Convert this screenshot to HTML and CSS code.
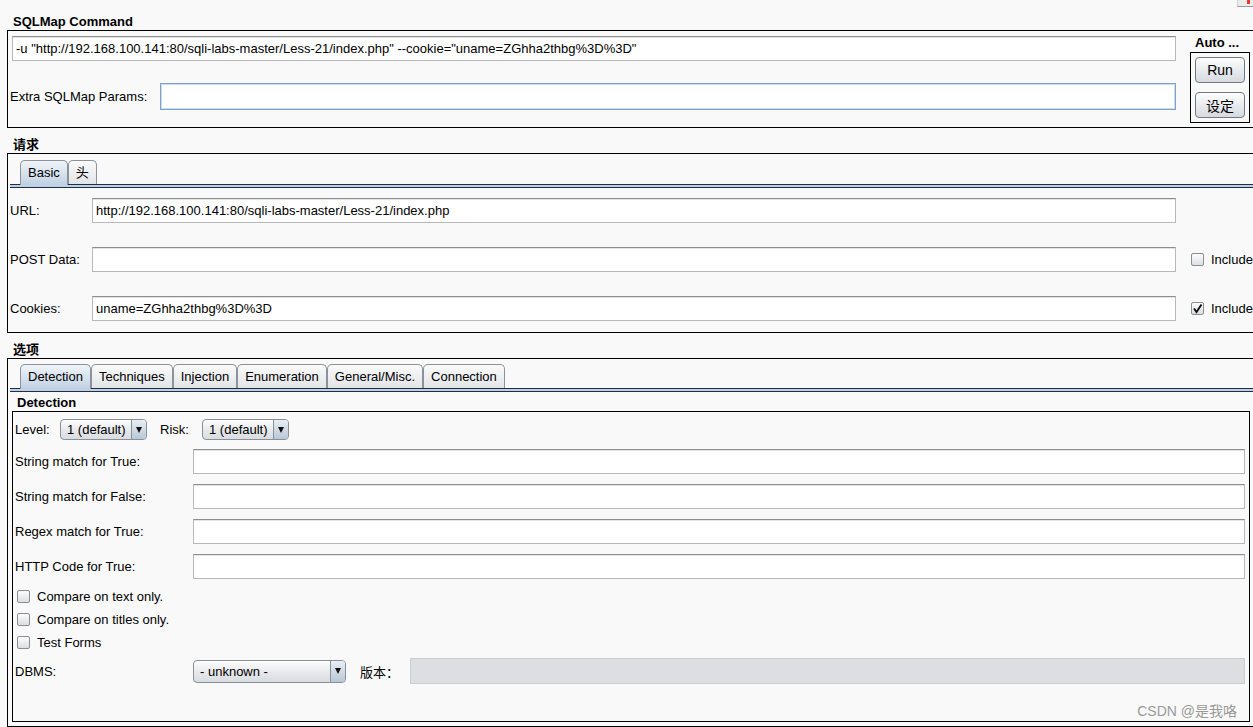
FILE: index.html
```html
<!DOCTYPE html>
<html>
<head>
    <meta charset="UTF-8">
    <title>SQLMap</title>
    <link rel="stylesheet" href="styles.css">
</head>
<body>
    <div class="corner"><span></span></div>

    <div class="ttl">SQLMap Command</div>
    <div class="panel cmd">
        <div class="cmd-main">
            <input class="inp cmd-line" type="text" value='-u "http://192.168.100.141:80/sqli-labs-master/Less-21/index.php" --cookie="uname=ZGhha2thbg%3D%3D"'>
            <div class="row extra-row">
                <label class="lbl extra-lbl">Extra SQLMap Params:</label>
                <input class="inp focus extra-inp" type="text">
            </div>
        </div>
        <div class="auto">
            <div class="auto-ttl">Auto ...</div>
            <div class="auto-box">
                <button class="btn">Run</button>
                <button class="btn">设定</button>
            </div>
        </div>
    </div>

    <div class="ttl next">请求</div>
    <div class="panel req">
        <div class="tabs">
            <div class="tab on">Basic</div>
            <div class="tab">头</div>
        </div>
        <div class="band"></div>
        <div class="req-rows">
            <div class="row req-row">
                <label class="lbl req-lbl">URL:</label>
                <input class="inp req-inp" type="text" value="http://192.168.100.141:80/sqli-labs-master/Less-21/index.php">
            </div>
            <div class="row req-row">
                <label class="lbl req-lbl">POST Data:</label>
                <input class="inp req-inp" type="text">
                <span class="chk inc"></span><span class="chk-txt">Include</span>
            </div>
            <div class="row req-row">
                <label class="lbl req-lbl">Cookies:</label>
                <input class="inp req-inp" type="text" value="uname=ZGhha2thbg%3D%3D">
                <span class="chk inc">
                    <svg width="11" height="11" viewBox="0 0 11 11"><path d="M2 5.5 L4.5 9 L9.5 1.5" fill="none" stroke="#111" stroke-width="1.9"/></svg>
                </span><span class="chk-txt">Include</span>
            </div>
        </div>
    </div>

    <div class="ttl next">选项</div>
    <div class="panel opts">
        <div class="tabs">
            <div class="tab on">Detection</div>
            <div class="tab">Techniques</div>
            <div class="tab">Injection</div>
            <div class="tab">Enumeration</div>
            <div class="tab">General/Misc.</div>
            <div class="tab">Connection</div>
        </div>
        <div class="band"></div>
        <div class="sub-ttl">Detection</div>
        <div class="det">
            <div class="row lvl-row">
                <label class="lbl lvl-lbl">Level:</label>
                <div class="sel lvl-sel"><span class="sel-txt">1 (default)</span><span class="arr"></span></div>
                <label class="lbl risk-lbl">Risk:</label>
                <div class="sel lvl-sel"><span class="sel-txt">1 (default)</span><span class="arr"></span></div>
            </div>
            <div class="row det-row first">
                <label class="lbl det-lbl">String match for True:</label>
                <input class="inp det-inp" type="text">
            </div>
            <div class="row det-row">
                <label class="lbl det-lbl">String match for False:</label>
                <input class="inp det-inp" type="text">
            </div>
            <div class="row det-row">
                <label class="lbl det-lbl">Regex match for True:</label>
                <input class="inp det-inp" type="text">
            </div>
            <div class="row det-row">
                <label class="lbl det-lbl">HTTP Code for True:</label>
                <input class="inp det-inp" type="text">
            </div>
            <div class="cb-list">
                <div class="row cb-row"><span class="chk"></span><span class="chk-txt">Compare on text only.</span></div>
                <div class="row cb-row"><span class="chk"></span><span class="chk-txt">Compare on titles only.</span></div>
                <div class="row cb-row"><span class="chk"></span><span class="chk-txt">Test Forms</span></div>
            </div>
            <div class="row dbms-row">
                <label class="lbl det-lbl">DBMS:</label>
                <div class="sel dbms-sel"><span class="sel-txt">- unknown -</span><span class="arr"></span></div>
                <label class="lbl ver-lbl">版本：</label>
                <div class="ver"></div>
            </div>
        </div>
    </div>

    <div class="mark">CSDN @是我咯</div>
</body>
</html>
```

FILE: styles.css
```css
* {
    box-sizing: border-box;
}

html, body {
    height: 100%;
}

body {
    margin: 0;
    padding: 14px 0 0 7px;
    background: #f9f9f9;
    font-family: "Liberation Sans", Arial, "Noto Sans CJK SC", sans-serif;
    font-size: 13px;
    color: #000;
    overflow: hidden;
    position: relative;
}

.corner {
    position: absolute;
    top: 0;
    right: 0;
    width: 16px;
    height: 7px;
    background: #ececec;
    border-bottom: 1px solid #9a9a9a;
    border-left: 1px solid #d0d0d0;
}

.corner span {
    position: absolute;
    top: 0;
    left: 9px;
    width: 3px;
    height: 4px;
    background: #e03c2c;
}

.ttl {
    font-weight: bold;
    height: 16px;
    line-height: 16px;
    padding-left: 6px;
}

.ttl.next {
    margin-top: 9px;
}

.panel {
    border: 1px solid #000;
    margin-right: -12px;
    padding-left: 2px;
}

.row {
    display: flex;
    align-items: center;
}

.lbl {
    flex: none;
    white-space: nowrap;
}

.inp {
    flex: none;
    height: 25px;
    margin: 0;
    padding: 0 3px;
    font: inherit;
    color: #000;
    background: #fff;
    border: 1px solid #b8b8b8;
    border-top-color: #8e8e8e;
    box-shadow: inset 0 1px 0 #e4e4e4;
    outline: none;
}

.inp.focus {
    border: 1px solid #7ea0cb;
    box-shadow: inset 0 0 0 1px #c9dbef;
}

/* command panel */
.cmd {
    height: 98px;
    display: grid;
    grid-template-columns: 1166px 60px;
    column-gap: 14px;
}

.cmd-main {
    padding-top: 5px;
}

.cmd-line {
    display: block;
    margin-left: 2px;
    width: 1164px;
}

.extra-row {
    margin-top: 22px;
}

.extra-lbl {
    width: 150px;
}

.extra-inp {
    width: 1016px;
    height: 27px;
}

.auto {
    padding-top: 4px;
}

.auto-ttl {
    font-weight: bold;
    height: 16px;
    line-height: 16px;
    padding-left: 5px;
}

.auto-box {
    margin-top: 1px;
    width: 60px;
    height: 71px;
    border: 1px solid #000;
    padding: 4px;
    display: flex;
    flex-direction: column;
    gap: 9px;
}

.btn {
    width: 50px;
    height: 26px;
    padding: 0;
    font: inherit;
    font-size: 14px;
    color: #000;
    border: 1px solid #737980;
    border-radius: 4px;
    background: linear-gradient(#fefefe, #e9ebee 50%, #d6dae0);
}

/* tabs */
.tabs {
    display: flex;
    align-items: flex-end;
    height: 24px;
    padding-left: 10px;
}

.tab {
    height: 24px;
    line-height: 23px;
    padding: 0 7px;
    border: 1px solid #8c9299;
    border-bottom: 0;
    border-radius: 5px 5px 0 0;
    background: linear-gradient(#fafafa, #e2e4e7);
}

.tab.on {
    position: relative;
    z-index: 1;
    height: 25px;
    margin-bottom: -1px;
    background: linear-gradient(#f0f4f8, #c0d1e3);
}

.band {
    height: 4px;
    border-top: 1px solid #1f2d45;
    border-bottom: 1px solid #1f2d45;
    background: #bfd1e4;
}

/* request panel */
.req {
    height: 180px;
    padding-top: 6px;
}

.req-rows {
    padding-top: 10px;
    display: flex;
    flex-direction: column;
    gap: 24px;
}

.req-row {
    height: 25px;
}

.req-lbl {
    width: 82px;
}

.req-inp {
    width: 1084px;
}

.chk {
    flex: none;
    width: 13px;
    height: 13px;
    border: 1px solid #8a8d92;
    border-radius: 2px;
    background: linear-gradient(#fdfdfd, #dcdee1);
    display: flex;
    align-items: center;
    justify-content: center;
}

.chk.inc {
    margin-left: 15px;
}

.chk-txt {
    margin-left: 7px;
    white-space: nowrap;
}

/* options panel */
.opts {
    height: 369px;
    padding-top: 5px;
}

.sub-ttl {
    margin-top: 3px;
    height: 16px;
    line-height: 16px;
    padding-left: 7px;
    font-weight: bold;
}

.det {
    margin-left: 2px;
    width: 1238px;
    height: 311px;
    border: 1px solid #000;
    padding-left: 2px;
}

.lvl-row {
    margin-top: 7px;
    height: 21px;
}

.lvl-lbl {
    width: 45px;
}

.risk-lbl {
    width: 42px;
    margin-left: 13px;
}

.sel {
    flex: none;
    display: flex;
    border: 1px solid #8a9098;
    border-radius: 4px;
    background: linear-gradient(#fdfdfd, #e6e8eb 55%, #d9dce0);
    overflow: hidden;
}

.lvl-sel {
    width: 87px;
    height: 21px;
}

.dbms-sel {
    width: 153px;
    height: 23px;
}

.sel-txt {
    flex: 1;
    padding-left: 6px;
    display: flex;
    align-items: center;
    white-space: nowrap;
}

.arr {
    flex: none;
    width: 15px;
    border-left: 1px solid #8a9098;
    background: linear-gradient(#e9eef4, #b9c7d6);
    display: flex;
    align-items: center;
    justify-content: center;
}

.arr::after {
    content: "";
    border-left: 3px solid transparent;
    border-right: 3px solid transparent;
    border-top: 6px solid #111;
}

.det-row {
    height: 25px;
    margin-top: 10px;
}

.det-row.first {
    margin-top: 9px;
}

.det-lbl {
    width: 178px;
}

.det-inp {
    width: 1052px;
}

.cb-list {
    margin-top: 6px;
}

.cb-row {
    height: 23px;
    padding-left: 2px;
}

.dbms-row {
    margin-top: 4px;
    height: 26px;
}

.ver-lbl {
    width: 50px;
    margin-left: 14px;
}

.ver {
    width: 835px;
    height: 26px;
    background: #dcdee2;
    border: 1px solid #cbcdd1;
}

.mark {
    position: absolute;
    right: 16px;
    top: 700px;
    font-size: 14px;
    color: #9a9a9a;
    font-family: "Liberation Sans", "Noto Sans CJK SC", sans-serif;
}
```
